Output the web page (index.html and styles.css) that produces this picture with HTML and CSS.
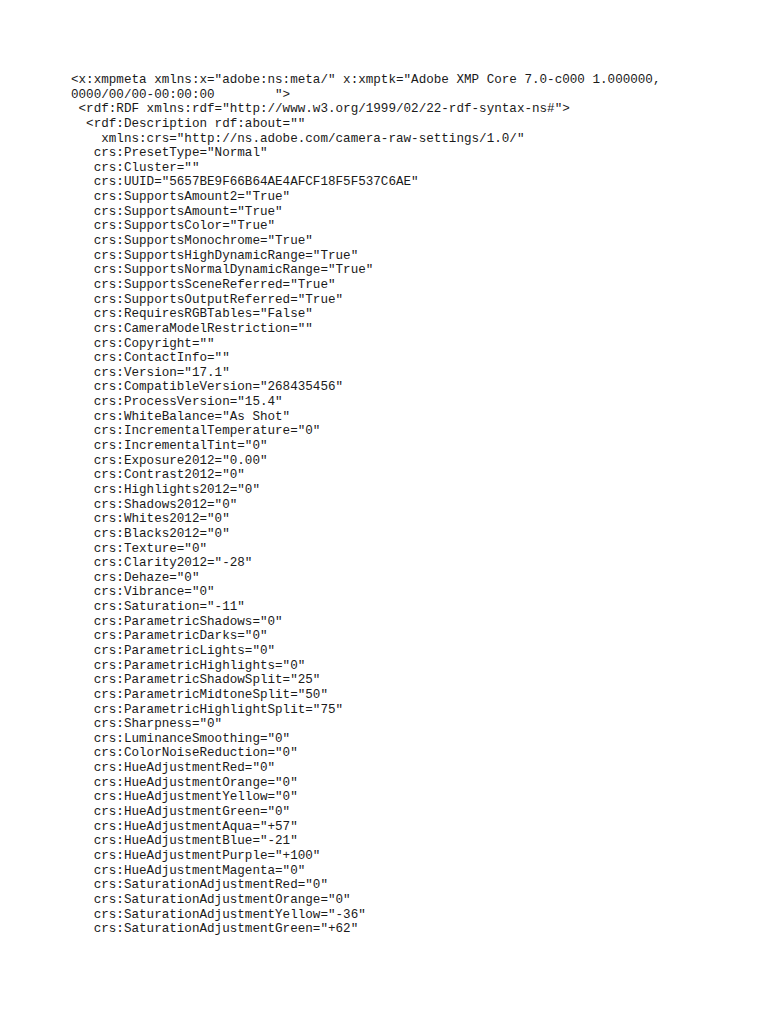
FILE: index.html
```html
<!DOCTYPE html>
<html>
<head>
<meta charset="utf-8">
<link rel="stylesheet" href="styles.css">
</head>
<body>
<pre class="doc">&lt;x:xmpmeta xmlns:x="adobe:ns:meta/" x:xmptk="Adobe XMP Core 7.0-c000 1.000000,
0000/00/00-00:00:00        "&gt;
 &lt;rdf:RDF xmlns:rdf="http://www.w3.org/1999/02/22-rdf-syntax-ns#"&gt;
  &lt;rdf:Description rdf:about=""
    xmlns:crs="http://ns.adobe.com/camera-raw-settings/1.0/"
   crs:PresetType="Normal"
   crs:Cluster=""
   crs:UUID="5657BE9F66B64AE4AFCF18F5F537C6AE"
   crs:SupportsAmount2="True"
   crs:SupportsAmount="True"
   crs:SupportsColor="True"
   crs:SupportsMonochrome="True"
   crs:SupportsHighDynamicRange="True"
   crs:SupportsNormalDynamicRange="True"
   crs:SupportsSceneReferred="True"
   crs:SupportsOutputReferred="True"
   crs:RequiresRGBTables="False"
   crs:CameraModelRestriction=""
   crs:Copyright=""
   crs:ContactInfo=""
   crs:Version="17.1"
   crs:CompatibleVersion="268435456"
   crs:ProcessVersion="15.4"
   crs:WhiteBalance="As Shot"
   crs:IncrementalTemperature="0"
   crs:IncrementalTint="0"
   crs:Exposure2012="0.00"
   crs:Contrast2012="0"
   crs:Highlights2012="0"
   crs:Shadows2012="0"
   crs:Whites2012="0"
   crs:Blacks2012="0"
   crs:Texture="0"
   crs:Clarity2012="-28"
   crs:Dehaze="0"
   crs:Vibrance="0"
   crs:Saturation="-11"
   crs:ParametricShadows="0"
   crs:ParametricDarks="0"
   crs:ParametricLights="0"
   crs:ParametricHighlights="0"
   crs:ParametricShadowSplit="25"
   crs:ParametricMidtoneSplit="50"
   crs:ParametricHighlightSplit="75"
   crs:Sharpness="0"
   crs:LuminanceSmoothing="0"
   crs:ColorNoiseReduction="0"
   crs:HueAdjustmentRed="0"
   crs:HueAdjustmentOrange="0"
   crs:HueAdjustmentYellow="0"
   crs:HueAdjustmentGreen="0"
   crs:HueAdjustmentAqua="+57"
   crs:HueAdjustmentBlue="-21"
   crs:HueAdjustmentPurple="+100"
   crs:HueAdjustmentMagenta="0"
   crs:SaturationAdjustmentRed="0"
   crs:SaturationAdjustmentOrange="0"
   crs:SaturationAdjustmentYellow="-36"
   crs:SaturationAdjustmentGreen="+62"</pre>
</body>
</html>
```

FILE: styles.css
```css
html, body {
  margin: 0;
  padding: 0;
  background: #ffffff;
}

.doc {
  margin: 0;
  padding: 73px 0 0 71px;
  font-family: "Liberation Mono", monospace;
  font-size: 12.6px;
  line-height: 14.64px;
  color: #1a1a1a;
  white-space: pre;
}
```
